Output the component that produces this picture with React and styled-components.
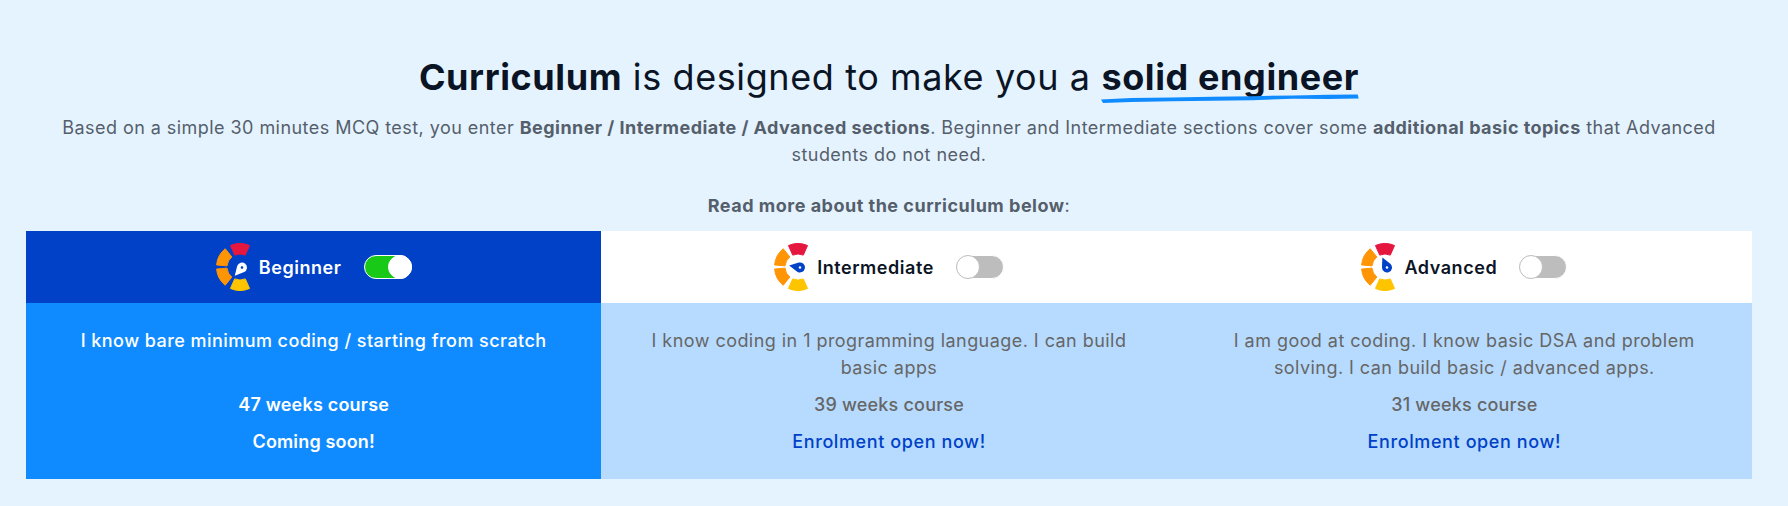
import React from 'react'
import styled, { createGlobalStyle } from 'styled-components'

const GlobalStyle = createGlobalStyle`
  body {
    margin: 0;
    background: #e5f3ff;
    font-family: "Inter", "Open Sans", sans-serif;
  }
`

const Section = styled.section`
  box-sizing: border-box;
  height: 506px;
  padding: 52px 36px 0 26px;
  text-align: center;
`

const Heading = styled.h2`
  margin: 0 0 12px;
  font-size: 36px;
  line-height: 50px;
  font-weight: 400;
  letter-spacing: 0.6px;
  color: #0b1424;
`

const Marked = styled.span`
  position: relative;
  font-weight: 700;
`

const Brush = styled.svg`
  position: absolute;
  left: 0;
  bottom: -4px;
  width: 100%;
  height: 9px;
`

const Intro = styled.p`
  margin: 0 auto 24px;
  width: 1670px;
  font-size: 18px;
  line-height: 27px;
  letter-spacing: 0.45px;
  color: #555f6b;
`

const ReadMore = styled.p`
  margin: 0 0 12px;
  font-size: 18px;
  line-height: 27px;
  letter-spacing: 0.5px;
  color: #555f6b;
`

const Grid = styled.div`
  display: grid;
  grid-template-columns: repeat(3, 1fr);
  grid-template-rows: 72px 176px;
`

const Column = styled.div`
  display: grid;
  grid-template-rows: subgrid;
  grid-row: span 2;
`

const Header = styled.div`
  display: flex;
  align-items: center;
  justify-content: center;
  background: ${p => (p.$active ? '#0041c8' : '#fff')};
  color: ${p => (p.$active ? '#fff' : '#0b1424')};
`

const Label = styled.span`
  margin: 0 22px 0 9px;
  font-size: 18px;
  font-weight: 600;
  letter-spacing: 0.55px;
`

const Toggle = styled.span`
  position: relative;
  box-sizing: border-box;
  width: 48px;
  height: 24px;
  border-radius: 12px;
  border: 1px solid #fff;
  background: ${p => (p.$on ? '#18c918' : '#bdbdbd')};
`

const Knob = styled.span`
  position: absolute;
  top: -1px;
  left: ${p => (p.$on ? '23px' : '-1px')};
  box-sizing: border-box;
  width: 24px;
  height: 24px;
  border-radius: 50%;
  background: #fff;
  border: 1px solid ${p => (p.$on ? '#fff' : '#bdbdbd')};
`

const Body = styled.div`
  display: flex;
  flex-direction: column;
  align-items: center;
  padding-top: 24px;
  background: ${p => (p.$active ? '#108bff' : '#b6dbff')};
  color: ${p => (p.$active ? '#fff' : '#666')};
  font-size: 18px;
  line-height: 27px;
`

const Blurb = styled.p`
  margin: 0;
  height: 54px;
  width: 490px;
  letter-spacing: 0.45px;
  font-weight: ${p => (p.$active ? 500 : 400)};
`

const Weeks = styled.p`
  margin: 10px 0;
  letter-spacing: 0.2px;
  font-weight: ${p => (p.$active ? 600 : 500)};
`

const Status = styled.p`
  margin: 0;
  letter-spacing: ${p => (p.$active ? '0.15px' : '0.6px')};
  font-weight: ${p => (p.$active ? 600 : 500)};
  color: ${p => (p.$active ? '#fff' : '#0041c8')};
`

// annular sector, angles in degrees clockwise from the top
function sector(from, to, r1 = 23.5, r2 = 13) {
  const pt = (r, a) => {
    const t = (a * Math.PI) / 180
    return `${(24 + r * Math.sin(t)).toFixed(2)} ${(24 - r * Math.cos(t)).toFixed(2)}`
  }
  return `M${pt(r1, from)} A${r1} ${r1} 0 0 1 ${pt(r1, to)} L${pt(r2, to)} A${r2} ${r2} 0 0 0 ${pt(r2, from)} Z`
}

function Gauge({ angle, needle, hole }) {
  return (
    <svg width="34" height="48" viewBox="0 0 34 48">
      <g strokeLinejoin="round" strokeWidth="1">
        <path d={sector(-24, 24)} fill="#e5173f" stroke="#e5173f" />
        <path d={sector(-85, -39)} fill="#ff9505" stroke="#ff9505" />
        <path d={sector(-141, -95)} fill="#ff9505" stroke="#ff9505" />
        <path d={sector(156, 204)} fill="#ffc400" stroke="#ffc400" />
      </g>
      <g transform={`translate(26 24.5) rotate(${angle})`}>
        <path d="M0 -11 L4.6 -2 A5 5 0 1 1 -4.6 -2 Z" fill={needle} />
        <circle r="1.3" fill={hole} />
      </g>
    </svg>
  )
}

const levels = [
  {
    name: 'Beginner',
    angle: -139,
    blurb: 'I know bare minimum coding / starting from scratch',
    weeks: '47 weeks course',
    status: 'Coming soon!',
    active: true,
  },
  {
    name: 'Intermediate',
    angle: -80,
    blurb: 'I know coding in 1 programming language. I can build basic apps',
    weeks: '39 weeks course',
    status: 'Enrolment open now!',
  },
  {
    name: 'Advanced',
    angle: -25,
    blurb: 'I am good at coding. I know basic DSA and problem solving. I can build basic / advanced apps.',
    weeks: '31 weeks course',
    status: 'Enrolment open now!',
  },
]

function App() {
  return (
    <Section>
      <GlobalStyle />
      <Heading>
        <b>Curriculum</b> is designed to make you a{' '}
        <Marked>
          solid engineer
          <Brush viewBox="0 0 255 9" preserveAspectRatio="none">
            <path d="M0 5.5 L30 4 L70 3.6 L110 2.8 L150 2.2 L190 1.4 L225 0.8 L254 0.6 L255 4.6 L225 5 L190 4.8 L150 6.2 L110 6.8 L70 7.2 L30 8 L2 9 Z" fill="#108bff" />
          </Brush>
        </Marked>
      </Heading>
      <Intro>
        Based on a simple 30 minutes MCQ test, you enter <b>Beginner / Intermediate / Advanced sections</b>. Beginner and Intermediate sections cover some <b>additional basic topics</b> that Advanced students do not need.
      </Intro>
      <ReadMore><b>Read more about the curriculum below</b>:</ReadMore>
      <Grid>
        {levels.map(l => (
          <Column key={l.name}>
            <Header $active={l.active}>
              <Gauge angle={l.angle} needle={l.active ? '#fff' : '#0041c8'} hole={l.active ? '#0041c8' : '#fff'} />
              <Label>{l.name}</Label>
              <Toggle $on={l.active}>
                <Knob $on={l.active} />
              </Toggle>
            </Header>
            <Body $active={l.active}>
              <Blurb $active={l.active}>{l.blurb}</Blurb>
              <Weeks $active={l.active}>{l.weeks}</Weeks>
              <Status $active={l.active}>{l.status}</Status>
            </Body>
          </Column>
        ))}
      </Grid>
    </Section>
  )
}

export default App
